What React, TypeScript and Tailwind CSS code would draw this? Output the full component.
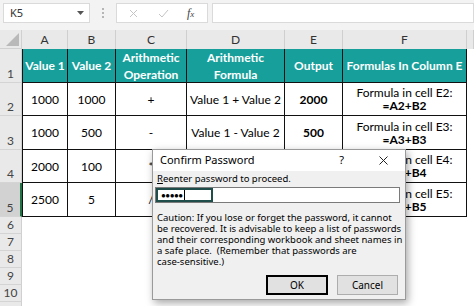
import React from "react";

const cellFont = { fontFamily: "Lato, 'Open Sans', sans-serif" };
const uiFont = { fontFamily: "'Noto Sans', 'Open Sans', sans-serif" };

function RowHead({ n, selected }: { n?: number; selected?: boolean }) {
  return (
    <div
      className={
        "flex items-end justify-center pb-[2px] text-[12px] leading-[13px] text-[#444] border-b border-[#d4d4d4] " +
        (selected
          ? "bg-[#d2d2d2] border-r-2 border-r-[#217346]"
          : "bg-[#e9e9e9] border-r border-r-[#d0d0d0]")
      }
    >
      {n}
    </div>
  );
}

function Head({ children, first }: { children: React.ReactNode; first?: boolean }) {
  return (
    <div
      className={
        "bg-[#17a09b] text-white font-bold text-[12px] leading-[17px] flex items-center justify-center text-center border-r border-b border-[#111] " +
        (first ? "border-l" : "")
      }
    >
      {children}
    </div>
  );
}

function Cell({
  children,
  first,
  bold,
}: {
  children?: React.ReactNode;
  first?: boolean;
  bold?: boolean;
}) {
  return (
    <div
      className={
        "bg-white text-black text-[12px] leading-[13px] flex flex-col items-center justify-center text-center border-r border-b border-[#111] " +
        (first ? "border-l " : "") +
        (bold ? "font-bold" : "")
      }
    >
      {children}
    </div>
  );
}

function Formula({ n }: { n: number }) {
  return (
    <div className="bg-white text-black text-[12px] leading-[13px] flex flex-col items-center justify-center text-center border-r border-b border-[#111]">
      <span>Formula in cell E{n}:</span>
      <span className="font-bold">=A{n}+B{n}</span>
    </div>
  );
}

export default function App() {
  const data = [
    ["1000", "1000", "+", "Value 1 + Value 2", "2000"],
    ["1000", "500", "-", "Value 1 - Value 2", "500"],
    ["2000", "100", "*", "Value 1 * Value 2", "200000"],
    ["2500", "5", "/", "Value 1 / Value 2", "500"],
  ];
  return (
    <div className="relative w-[474px] h-[306px] overflow-hidden bg-white" style={cellFont}>
      {/* formula bar */}
      <div className="h-[30px] bg-[#f3f3f3] flex items-start pt-[3px]">
        <div
          className="ml-[3px] w-[87px] h-[20px] bg-white border border-[#dadada] flex items-center justify-between pl-[6px] pr-[5px] text-[11px] text-[#333]"
          style={uiFont}
        >
          <span>K5</span>
          <svg width="7" height="4" viewBox="0 0 7 4">
            <path d="M0 0 L7 0 L3.5 4 Z" fill="#555" />
          </svg>
        </div>
        <div className="w-[26px] h-[20px] flex flex-col items-center justify-center gap-[2px]">
          <span className="w-[2px] h-[2px] bg-[#b5b5b5]" />
          <span className="w-[2px] h-[2px] bg-[#b5b5b5]" />
          <span className="w-[2px] h-[2px] bg-[#b5b5b5]" />
        </div>
        <div className="w-[92px] h-[20px] bg-white border border-[#dadada] flex items-center">
          <svg className="ml-[12px]" width="9" height="9" viewBox="0 0 9 9">
            <path d="M1 1 L8 8 M8 1 L1 8" stroke="#c4c4c4" strokeWidth="1" />
          </svg>
          <svg className="ml-[20px]" width="11" height="9" viewBox="0 0 11 9">
            <path d="M1 5 L4 8 L10 1" stroke="#c4c4c4" strokeWidth="1" fill="none" />
          </svg>
          <span
            className="ml-[18px] text-[12px] italic text-[#444]"
            style={{ fontFamily: "'Liberation Serif', serif" }}
          >
            f<span className="text-[9px]">x</span>
          </span>
        </div>
        <div className="ml-[4px] flex-1 h-[20px] bg-white border border-[#dadada]" />
      </div>

      {/* sheet grid */}
      <div
        className="grid grid-cols-[22px_46px_48px_71px_98px_58px_124px_7px]"
        style={{ gridTemplateRows: "19px 34px 33px 34px 33px 34px 17px 17px 17px 17px 17px 17px" }}
      >
        {/* column headers */}
        <div className="bg-[#e9e9e9] border-r border-b border-[#d0d0d0] flex items-end justify-end pr-[2px] pb-[2px]">
          <svg width="13" height="13" viewBox="0 0 13 13">
            <path d="M13 0 L13 13 L0 13 Z" fill="#b9b9b9" />
          </svg>
        </div>
        {["A", "B", "C", "D", "E", "F", ""].map((c, i) => (
          <div
            key={i}
            className="bg-[#e9e9e9] border-r border-[#cfcfcf] flex items-center justify-center text-[12px] text-[#333]"
          >
            {c}
          </div>
        ))}

        {/* row 1 */}
        <RowHead n={1} />
        <Head first>Value 1</Head>
        <Head>Value 2</Head>
        <Head>
          Arithmetic
          <br />
          Operation
        </Head>
        <Head>
          Arithmetic
          <br />
          Formula
        </Head>
        <Head>Output</Head>
        <Head>Formulas In Column E</Head>
        <div className="bg-white" />

        {data.map((r, i) => (
          <React.Fragment key={i}>
            <RowHead n={i + 2} selected={i === 3} />
            <Cell first>{r[0]}</Cell>
            <Cell>{r[1]}</Cell>
            <Cell>{r[2]}</Cell>
            <Cell>{r[3]}</Cell>
            <Cell bold>{r[4]}</Cell>
            <Formula n={i + 2} />
            <div className="bg-white" />
          </React.Fragment>
        ))}

        {[6, 7, 8, 9, 10, 0].map((n) => (
          <React.Fragment key={n}>
            <RowHead n={n || undefined} />
            <div className="col-span-7 bg-white" />
          </React.Fragment>
        ))}
      </div>

      {/* dialog */}
      <div
        className="absolute left-[152px] top-[149px] w-[254px] h-[151px] bg-[#f0f0f0] border border-[#9a9a9a] shadow-[2px_3px_8px_rgba(0,0,0,0.35)] flex flex-col text-black"
        style={uiFont}
      >
        <div className="h-[21px] bg-white flex items-center pl-[7px] text-[11px]">
          <span>Confirm Password</span>
          <span className="ml-auto mr-[35px] text-[11px]">?</span>
          <svg className="mr-[17px]" width="9" height="9" viewBox="0 0 9 9">
            <path d="M0.5 0.5 L8.5 8.5 M8.5 0.5 L0.5 8.5" stroke="#222" strokeWidth="1" />
          </svg>
        </div>
        <div className="pl-[4px] pt-[2px] text-[9.5px] leading-[12px]">
          <span className="underline">R</span>eenter password to proceed.
        </div>
        <div className="ml-[2px] mr-[5px] mt-[2px] h-[16px] bg-white border border-[#7a7a7a] flex items-stretch">
          <div className="w-[57px] border-2 border-[#1f4d4a] flex items-center pl-[3px] text-[8px] tracking-[-0.5px]">
            ●●●●●<span className="w-[1px] h-[10px] bg-black ml-[1px]" />
          </div>
        </div>
        <div className="pl-[4px] mt-[9px] text-[9.5px] leading-[11px] whitespace-nowrap">
          Caution: If you lose or forget the password, it cannot
          <br />
          be recovered. It is advisable to keep a list of passwords
          <br />
          and their corresponding workbook and sheet names in
          <br />
          a safe place. &nbsp;(Remember that passwords are
          <br />
          case-sensitive.)
        </div>
        <div className="mt-auto mb-[4px] flex justify-end gap-[9px] pr-[7px] text-[10px]">
          <div className="w-[62px] h-[20px] bg-[#e1e1e1] border-2 border-black flex items-center justify-center">
            OK
          </div>
          <div className="w-[61px] h-[20px] bg-[#e1e1e1] border border-[#adadad] flex items-center justify-center">
            Cancel
          </div>
        </div>
      </div>
    </div>
  );
}
